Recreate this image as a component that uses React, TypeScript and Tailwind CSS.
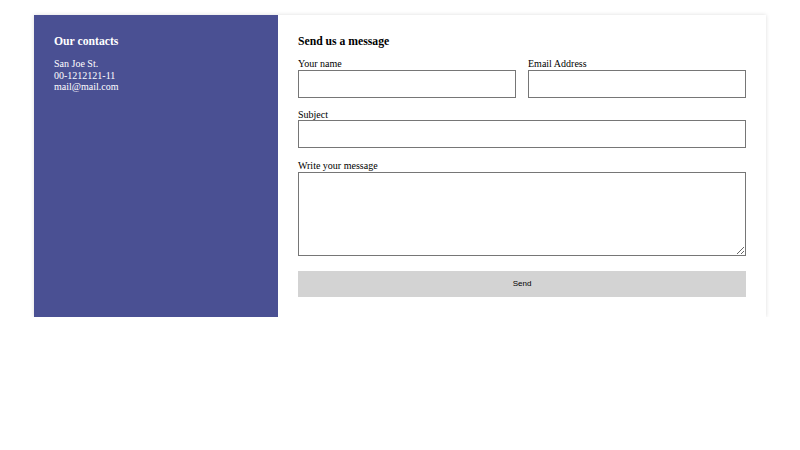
export default function App() {
  const inputCls = "block w-full border border-[#767676] bg-white";

  return (
    <div className="bg-white px-[34px] pt-[15px] font-['Liberation_Serif',serif] text-[10px] leading-[1.15] text-black">
      <div className="grid grid-cols-[244px_1fr] shadow-[0_0_4px_rgba(0,0,0,0.14)]">
        <div className="bg-[#4a5093] p-5 text-white">
          <h3 className="mb-[10px] text-[11.7px] font-bold">Our contacts</h3>
          <p>San Joe St.</p>
          <p>00-1212121-11</p>
          <p>mail@mail.com</p>
        </div>

        <form className="bg-white p-5" onSubmit={(e) => e.preventDefault()}>
          <h3 className="mb-[10px] text-[11.7px] font-bold">Send us a message</h3>
          <div className="grid grid-cols-2 gap-3">
            <label className="block">
              <span className="block">Your name</span>
              <input type="text" className={`${inputCls} h-[28px]`} />
            </label>
            <label className="block">
              <span className="block">Email Address</span>
              <input type="email" className={`${inputCls} h-[28px]`} />
            </label>
          </div>
          <label className="mt-[11px] block">
            <span className="block">Subject</span>
            <input type="text" className={`${inputCls} h-[28px]`} />
          </label>
          <label className="mt-3 block">
            <span className="block">Write your message</span>
            <textarea className={`${inputCls} h-[84px]`} />
          </label>
          <button
            type="submit"
            className="mt-[15px] block h-[26px] w-full bg-[#d3d3d3] font-['Liberation_Sans',sans-serif] text-[8px]"
          >
            Send
          </button>
        </form>
      </div>
    </div>
  );
}
